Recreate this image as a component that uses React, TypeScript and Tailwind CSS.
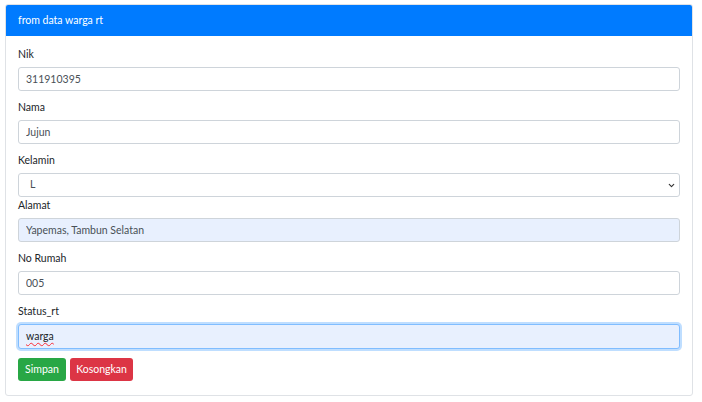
import { ChevronDown } from "lucide-react";

const font = { fontFamily: 'Lato, "Noto Sans", sans-serif' };

function Label({ children }: { children: string }) {
  return <label className="mb-[5px] block text-[10.5px] leading-[16px] text-[#212529]">{children}</label>;
}

function Field({
  label,
  value,
  tone = "plain",
}: {
  label: string;
  value: string;
  tone?: "plain" | "filled";
}) {
  const box = tone === "filled" ? "bg-[#e8f0fe]" : "bg-white";
  return (
    <div className="mb-[8px]">
      <Label>{label}</Label>
      <input
        readOnly
        value={value}
        className={`block h-[24px] w-full rounded-[3px] border border-[#ced4da] px-[7px] text-[10.5px] text-[#495057] outline-none ${box}`}
        style={font}
      />
    </div>
  );
}

export default function App() {
  return (
    <div className="min-h-screen bg-white pl-[5px] pr-[9px] pt-[4px]" style={font}>
      <div className="overflow-hidden rounded-[3px] border border-[#dfe2e6] bg-white">
        <div className="flex h-[31px] items-center bg-[#007bff] px-[12px] text-[10.5px] text-white">
          from data warga rt
        </div>
        <div className="px-[12px] pb-[14px] pt-[10px]">
          <Field label="Nik" value="311910395" />
          <Field label="Nama" value="Jujun" />
          <div>
            <Label>Kelamin</Label>
            <div className="relative flex h-[24px] items-center rounded-[3px] border border-[#ced4da] bg-white pl-[11px] text-[10.5px] text-[#495057]">
              L
              <ChevronDown className="absolute right-[3px] top-[7px] h-[9px] w-[9px] text-[#333]" strokeWidth={3} />
            </div>
          </div>
          <Field label="Alamat" value="Yapemas, Tambun Selatan" tone="filled" />
          <Field label="No Rumah" value="005" />
          <div className="mb-[8px]">
            <Label>Status_rt</Label>
            <div className="flex h-[25px] items-center rounded-[3px] border border-[#80bdff] bg-[#e8f0fe] px-[7px] text-[10.5px] text-[#212529] shadow-[0_0_0_2px_rgba(0,123,255,0.25)]">
              <span className="underline decoration-red-500 decoration-wavy decoration-[1px] underline-offset-[2px]">
                warga
              </span>
            </div>
          </div>
          <div className="mt-[9px] flex gap-[4px]">
            <button className="h-[23px] w-[48px] rounded-[3px] bg-[#28a745] text-[10.5px] text-white">Simpan</button>
            <button className="h-[23px] w-[63px] rounded-[3px] bg-[#dc3545] text-[10.5px] text-white">Kosongkan</button>
          </div>
        </div>
      </div>
    </div>
  );
}
